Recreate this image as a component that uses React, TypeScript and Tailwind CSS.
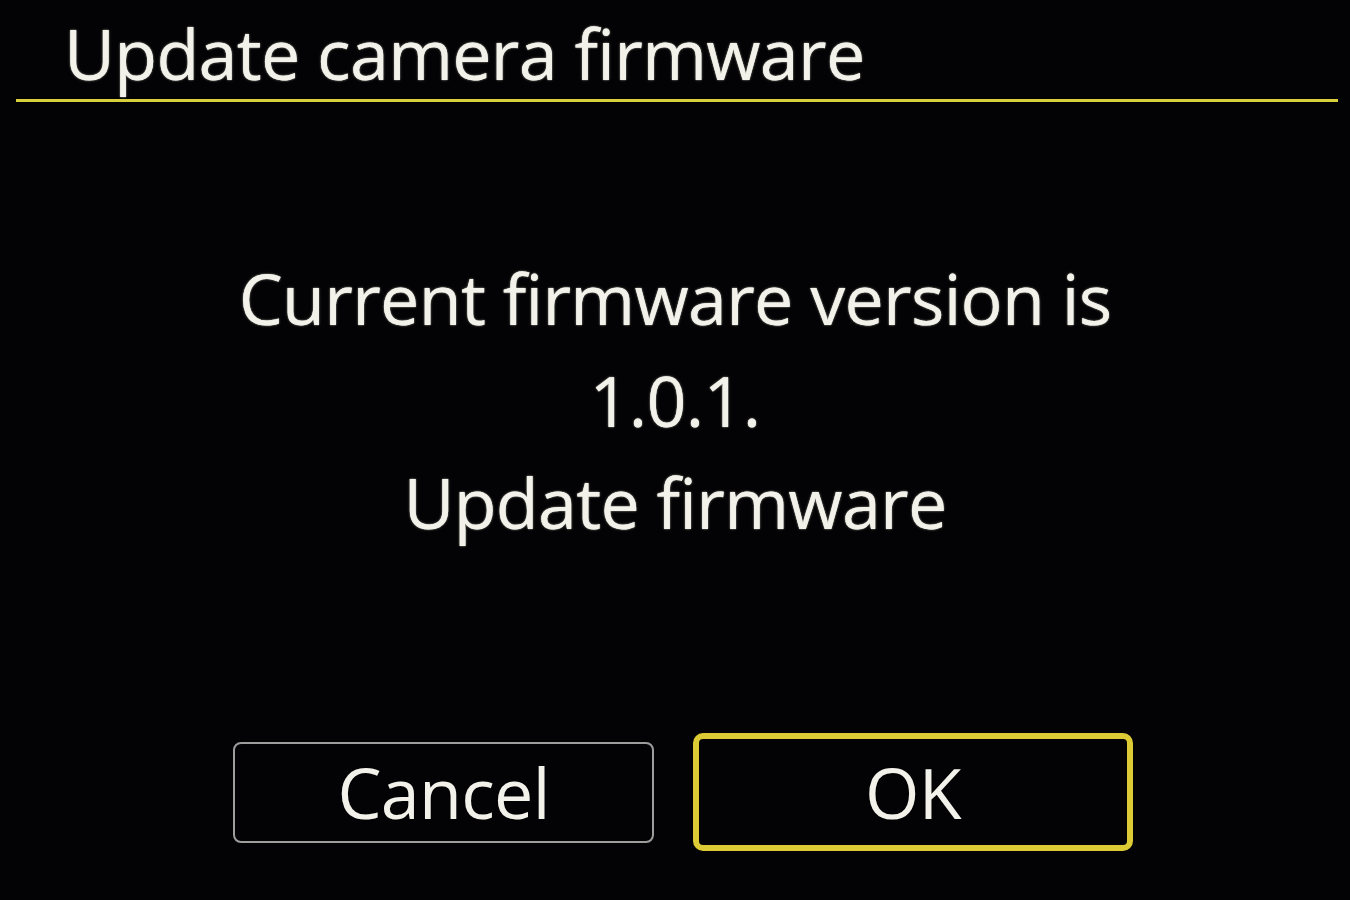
export default function App() {
  return (
    <div className="w-[1350px] h-[900px] bg-[#030305] text-[#f2f1ea] flex flex-col overflow-hidden font-['Open_Sans','Noto_Sans',sans-serif] font-medium [text-shadow:0_0_1px_rgba(255,255,240,0.9),0_0_3px_rgba(255,255,240,0.35)]">
      {/* header */}
      <div className="pt-[13px] pl-[64px] h-[99px]">
        <h1 className="text-[70px] leading-[80px] tracking-[-0.7px]">Update camera firmware</h1>
      </div>
      <div className="ml-[16px] mr-[12px] h-[3px] bg-[#d8cf3c]" />

      {/* message */}
      <div className="mt-[145px] flex flex-col items-center text-[70px] leading-[102px] tracking-[-0.7px]">
        <p>Current firmware version is</p>
        <p>1.0.1.</p>
        <p>Update firmware</p>
      </div>

      {/* buttons */}
      <div className="mt-[180px] flex items-center pl-[233px] gap-[39px]">
        <button className="w-[421px] h-[101px] rounded-[8px] border-2 border-[#9d9d9b] flex items-center justify-center text-[70px] leading-none tracking-[-0.7px]">
          Cancel
        </button>
        <button className="w-[440px] h-[118px] rounded-[10px] border-[6px] border-[#dccb34] flex items-center justify-center text-[70px] leading-none tracking-[-0.7px]">
          OK
        </button>
      </div>
    </div>
  )
}
